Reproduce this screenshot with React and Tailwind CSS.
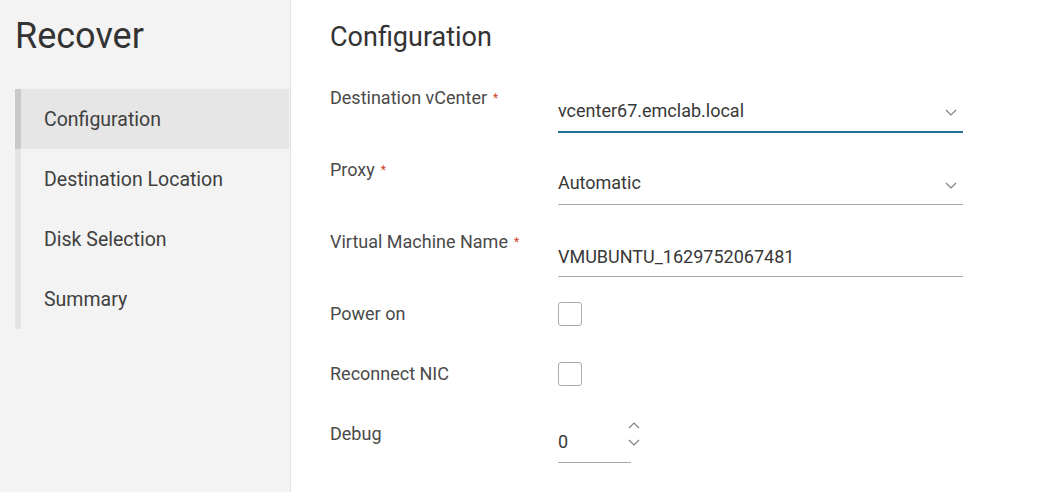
import React from "react";

const Chevron = ({ up = false, className = "" }) => (
  <svg width="12" height="7" viewBox="0 0 12 7" className={className} fill="none" stroke="#808080" strokeWidth="1.2">
    {up ? <path d="M1 6 L6 1 L11 6" /> : <path d="M1 1 L6 6 L11 1" />}
  </svg>
);

const Req = () => <span className="ml-[6px] text-[12px] text-[#d0412b] relative top-[-2px]">*</span>;

const Label = ({ children, req }) => (
  <div className="w-[228px] shrink-0 text-[18px] leading-[20px] text-[#4a4a4a]">
    {children}
    {req && <Req />}
  </div>
);

export default function App() {
  const nav = ["Configuration", "Destination Location", "Disk Selection", "Summary"];
  return (
    <div className="flex w-[1038px] h-[492px] overflow-hidden bg-white text-[#333]" style={{ fontFamily: "Roboto, 'Liberation Sans', sans-serif" }}>
      <aside className="w-[291px] shrink-0 bg-[#f3f3f3] border-r border-[#e4e4e4] pt-[15px]">
        <h1 className="pl-[15px] text-[36px] leading-[42px] text-[#333] font-normal">Recover</h1>
        <nav className="mt-[32px] ml-[15px] mr-[1px]">
          {nav.map((n, i) => (
            <div
              key={n}
              className={
                "h-[60px] flex items-center pl-[23px] pt-[2px] text-[19.5px] text-[#404040] border-l-[6px] " +
                (i === 0 ? "bg-[#e6e6e6] border-[#c9c9c9]" : "border-[#e4e4e4]")
              }
            >
              {n}
            </div>
          ))}
        </nav>
      </aside>
      <main className="flex-1 pl-[39px] pt-[21px]">
        <h2 className="text-[27px] leading-[32px] text-[#333] font-normal">Configuration</h2>
        <div className="mt-[35px] flex flex-col">
          <div className="flex h-[72px]">
            <Label req>Destination vCenter</Label>
            <div className="w-[405px] h-[45px] flex items-center justify-between border-b-[2px] border-[#1f7092] pr-[6px]">
              <span className="text-[18px] text-[#383838] pt-[1px]">vcenter67.emclab.local</span>
              <Chevron className="mt-[6px]" />
            </div>
          </div>
          <div className="flex h-[72px]">
            <Label req>Proxy</Label>
            <div className="w-[405px] h-[45px] flex items-center justify-between border-b border-[#a8a8a8] pr-[6px]">
              <span className="text-[18px] text-[#383838]">Automatic</span>
              <Chevron className="mt-[6px]" />
            </div>
          </div>
          <div className="flex h-[72px]">
            <Label req>Virtual Machine Name</Label>
            <div className="w-[405px] h-[45px] flex items-center border-b border-[#a8a8a8]">
              <span className="text-[18px] text-[#383838] pt-[4px]">VMUBUNTU_1629752067481</span>
            </div>
          </div>
          <div className="flex h-[60px]">
            <Label>Power on</Label>
            <div className="w-[24px] h-[24px] border border-[#ababab] rounded-[3px] bg-white mt-[-2px]" />
          </div>
          <div className="flex h-[60px]">
            <Label>Reconnect NIC</Label>
            <div className="w-[24px] h-[24px] border border-[#ababab] rounded-[3px] bg-white mt-[-2px]" />
          </div>
          <div className="flex h-[60px]">
            <Label>Debug</Label>
            <div className="flex items-start">
              <div className="w-[73px] h-[39px] border-b border-[#a8a8a8] flex items-end pb-[10px]">
                <span className="text-[18px] leading-[20px] text-[#383838]">0</span>
              </div>
              <div className="flex flex-col gap-[10px] ml-[-3px] mt-[-2px]">
                <Chevron up />
                <Chevron />
              </div>
            </div>
          </div>
        </div>
      </main>
    </div>
  );
}
